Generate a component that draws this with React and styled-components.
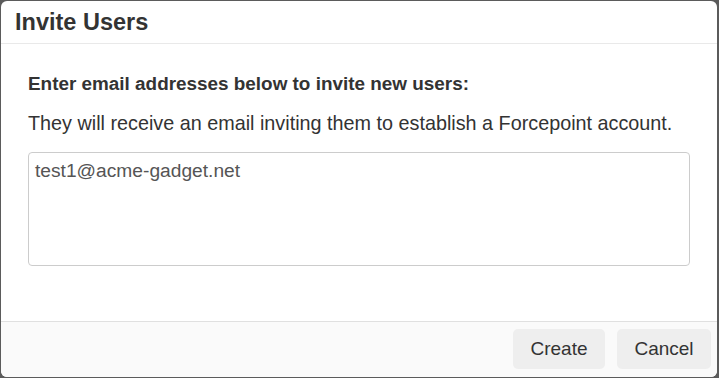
import styled, { createGlobalStyle } from "styled-components";

const GlobalStyle = createGlobalStyle`
  html, body {
    margin: 0;
    padding: 0;
    background: #5b5b5b;
    font-family: "Liberation Sans", Arial, sans-serif;
  }
  * { box-sizing: border-box; }
`;

const Dialog = styled.div`
  width: 716px;
  height: 376px;
  margin: 1px 0 0 1px;
  background: #fff;
  border-radius: 6px;
  overflow: hidden;
  display: flex;
  flex-direction: column;
`;

const Header = styled.div`
  height: 43px;
  padding: 1px 14px 0;
  display: flex;
  align-items: center;
  border-bottom: 1px solid #e9e9e9;
`;

const Title = styled.h2`
  margin: 0;
  font-size: 23.5px;
  font-weight: bold;
  color: #333;
`;

const Body = styled.div`
  flex: 1;
  padding: 29px 27px 0 27px;
  display: flex;
  flex-direction: column;
`;

const Lead = styled.p`
  margin: 0;
  font-size: 18.9px;
  font-weight: bold;
  color: #333;
  line-height: 22px;
`;

const Note = styled.p`
  margin: 17px 0 0;
  font-size: 19.8px;
  color: #333;
  line-height: 22px;
`;

const EmailBox = styled.textarea`
  margin-top: 18px;
  width: 662px;
  height: 114px;
  resize: none;
  border: 1px solid #ccc;
  border-radius: 4px;
  padding: 7px 6px;
  font-family: "Liberation Sans", Arial, sans-serif;
  font-size: 19.2px;
  line-height: 22px;
  color: #555;
  outline: none;
`;

const Footer = styled.div`
  height: 56px;
  background: #fafafa;
  border-top: 1px solid #e0e0e0;
  display: flex;
  justify-content: flex-end;
  align-items: flex-start;
  gap: 12px;
  padding: 7px 6px 0 0;
`;

const Button = styled.button`
  height: 40px;
  width: ${(p) => p.$w}px;
  border: none;
  border-radius: 5px;
  background: #eeeeee;
  color: #333;
  font-family: "Liberation Sans", Arial, sans-serif;
  font-size: 19px;
  cursor: pointer;
`;

export default function App() {
  return (
    <>
      <GlobalStyle />
      <Dialog>
        <Header>
          <Title>Invite Users</Title>
        </Header>
        <Body>
          <Lead>Enter email addresses below to invite new users:</Lead>
          <Note>They will receive an email inviting them to establish a Forcepoint account.</Note>
          <EmailBox defaultValue="test1@acme-gadget.net" />
        </Body>
        <Footer>
          <Button $w={92}>Create</Button>
          <Button $w={94}>Cancel</Button>
        </Footer>
      </Dialog>
    </>
  );
}
